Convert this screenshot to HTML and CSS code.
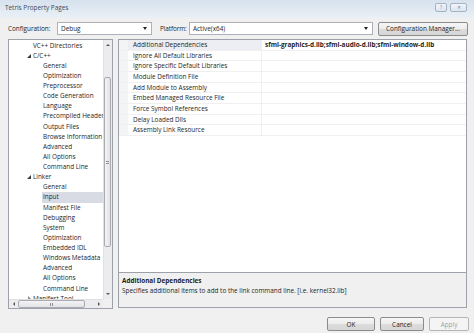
FILE: index.html
```html
<!DOCTYPE html>
<html>
<head>
<meta charset="utf-8">
<title>Tetris Property Pages</title>
<link rel="stylesheet" href="styles.css">
</head>
<body>
<div class="titlebar">
	<span class="title">Tetris Property Pages</span>
	<div class="caption">
		<span class="cbtn help">?</span>
		<span class="cbtn close">&#x2715;</span>
	</div>
</div>

<div class="toolbar">
	<label class="lbl cfg-lbl">Configuration:</label>
	<div class="combo cfg"><span>Debug</span><i class="drop"></i></div>
	<label class="lbl plat-lbl">Platform:</label>
	<div class="combo plat"><span>Active(x64)</span><i class="drop"></i></div>
	<button class="btn mgr">Configuration Manager...</button>
</div>

<div class="main">
	<div class="tree">
		<div class="tree-view">
			<div class="nodes">
				<div class="node l1"><i class="exp"></i><span class="txt">VC++ Directories</span></div>
				<div class="node l1"><i class="exp open"></i><span class="txt">C/C++</span></div>
				<div class="node l2"><span class="txt">General</span></div>
				<div class="node l2"><span class="txt">Optimization</span></div>
				<div class="node l2"><span class="txt">Preprocessor</span></div>
				<div class="node l2"><span class="txt">Code Generation</span></div>
				<div class="node l2"><span class="txt">Language</span></div>
				<div class="node l2"><span class="txt">Precompiled Headers</span></div>
				<div class="node l2"><span class="txt">Output Files</span></div>
				<div class="node l2"><span class="txt">Browse Information</span></div>
				<div class="node l2"><span class="txt">Advanced</span></div>
				<div class="node l2"><span class="txt">All Options</span></div>
				<div class="node l2"><span class="txt">Command Line</span></div>
				<div class="node l1"><i class="exp open"></i><span class="txt">Linker</span></div>
				<div class="node l2"><span class="txt">General</span></div>
				<div class="node l2 selected"><span class="txt">Input</span></div>
				<div class="node l2"><span class="txt">Manifest File</span></div>
				<div class="node l2"><span class="txt">Debugging</span></div>
				<div class="node l2"><span class="txt">System</span></div>
				<div class="node l2"><span class="txt">Optimization</span></div>
				<div class="node l2"><span class="txt">Embedded IDL</span></div>
				<div class="node l2"><span class="txt">Windows Metadata</span></div>
				<div class="node l2"><span class="txt">Advanced</span></div>
				<div class="node l2"><span class="txt">All Options</span></div>
				<div class="node l2"><span class="txt">Command Line</span></div>
				<div class="node l1"><i class="exp closed"></i><span class="txt">Manifest Tool</span></div>
			</div>
			<div class="vscroll">
				<div class="arr up"></div>
				<div class="vtrack"><div class="vthumb"><i class="grip"></i></div></div>
				<div class="arr down"></div>
			</div>
		</div>
		<div class="hbar">
			<div class="hscroll">
				<div class="arr left"></div>
				<div class="htrack"><div class="hthumb"><i class="grip"></i></div></div>
				<div class="arr right"></div>
			</div>
			<div class="corner"></div>
		</div>
	</div>

	<div class="props">
		<div class="grid">
			<div class="row selected"><span class="gm"></span><span class="name">Additional Dependencies</span><span class="val">sfml-graphics-d.lib;sfml-audio-d.lib;sfml-window-d.lib</span></div>
			<div class="row"><span class="gm"></span><span class="name">Ignore All Default Libraries</span><span class="val"></span></div>
			<div class="row"><span class="gm"></span><span class="name">Ignore Specific Default Libraries</span><span class="val"></span></div>
			<div class="row"><span class="gm"></span><span class="name">Module Definition File</span><span class="val"></span></div>
			<div class="row"><span class="gm"></span><span class="name">Add Module to Assembly</span><span class="val"></span></div>
			<div class="row"><span class="gm"></span><span class="name">Embed Managed Resource File</span><span class="val"></span></div>
			<div class="row"><span class="gm"></span><span class="name">Force Symbol References</span><span class="val"></span></div>
			<div class="row"><span class="gm"></span><span class="name">Delay Loaded Dlls</span><span class="val"></span></div>
			<div class="row"><span class="gm"></span><span class="name">Assembly Link Resource</span><span class="val"></span></div>
		</div>
		<div class="desc">
			<h4>Additional Dependencies</h4>
			<p>Specifies additional items to add to the link command line. [i.e. kernel32.lib]</p>
		</div>
	</div>
</div>

<div class="footer">
	<button class="btn ok">OK</button>
	<button class="btn cancel">Cancel</button>
	<button class="btn apply" disabled>Apply</button>
</div>
</body>
</html>
```

FILE: styles.css
```css
*{ margin:0; padding:0; box-sizing:border-box;}
body{ width:474px; height:333px; overflow:hidden; background:#f0f0f0; font-family:"Segoe UI","Open Sans",sans-serif; font-size:6.4px; color:#1e1e1e;}

/* title bar */
.titlebar{ height:18px; display:flex; justify-content:space-between; padding:0 7px 0 5px; background:linear-gradient(#d6e2ee,#eaf0f6);}
.title{ line-height:16px; color:#3c4a5c;}
.caption{ display:flex; gap:3px; margin-top:3px;}
.cbtn{ height:9px; border:1px solid #a3b2c4; border-radius:2px; background:linear-gradient(#f3f6fa,#dce4ee); font-size:5px; line-height:7px; text-align:center; color:#7b8796;}
.cbtn.help{ width:12px;}
.cbtn.close{ width:17px;}

/* configuration row */
.toolbar{ display:flex; align-items:center; height:21px; padding:0 6px 0 8px;}
.lbl{ display:block; flex:none; white-space:nowrap;}
.cfg-lbl{ width:49px;}
.plat-lbl{ width:29px; margin-left:8px; letter-spacing:-0.1px;}
.combo{ flex:none; height:13px; display:flex; align-items:center; justify-content:space-between; border:1px solid #adb0b8; background:#fff; padding:0 4px 0 3px;}
.combo.cfg{ width:95px;}
.combo.plat{ width:184px;}
.drop{ width:0; height:0; border-left:2.5px solid transparent; border-right:2.5px solid transparent; border-top:3px solid #222;}
.btn{ font-family:inherit; font-size:6.4px; color:#1e1e1e; height:14px; border:1px solid #8c8c8c; border-radius:2px; background:linear-gradient(#f6f6f6 0,#ececec 50%,#dcdcdc 51%,#d6d6d6 100%);}
.btn.mgr{ flex:none; width:90px; margin-left:5px;}

/* main area */
.main{ display:flex; gap:5px; padding:0 7px 0 8px;}

.tree{ width:105px; height:270px; border:1px solid #9da2aa; background:#fff; display:flex; flex-direction:column;}
.tree-view{ flex:1; display:flex; overflow:hidden;}
.nodes{ flex:1; overflow:hidden; padding-top:0.5px;}
.node{ height:10.125px; line-height:10.125px; display:flex; align-items:center; white-space:nowrap; overflow:hidden;}
.node.l1{ padding-left:16px;}
.node.l2{ padding-left:34px;}
.exp{ width:8px; height:8px; flex:none; display:flex; align-items:center; justify-content:center;}
.exp.open::before{ content:""; width:0; height:0; border-top:4px solid transparent; border-right:4px solid #3a3a3a;}
.exp.closed::before{ content:""; width:0; height:0; border-top:3px solid transparent; border-bottom:3px solid transparent; border-left:3px solid #8a8a8a;}
.txt{ flex:1; padding-left:1px; margin-left:-1px;}
.node.selected .txt{ background:#d9dbe4;}

.vscroll{ width:9px; flex:none; display:flex; flex-direction:column; background:#ececee; border-left:1px solid #e0e0e3;}
.arr{ flex:none; display:flex; align-items:center; justify-content:center;}
.vscroll .arr{ height:10px;}
.arr.up::before{ content:""; border-left:2px solid transparent; border-right:2px solid transparent; border-bottom:2px solid #555;}
.arr.down::before{ content:""; border-left:2px solid transparent; border-right:2px solid transparent; border-top:2px solid #555;}
.vtrack{ flex:1; padding-top:27px;}
.vthumb{ width:7px; height:170px; border:1px solid #a9abb0; border-radius:2px; background:linear-gradient(90deg,#f4f4f5,#e1e2e5); display:flex; align-items:center; justify-content:center;}
.grip{ display:block; width:3px; height:3px; border-top:1px solid #8f9196; border-bottom:1px solid #8f9196;}

.hbar{ height:9px; display:flex; flex:none;}
.hscroll{ flex:1; display:flex; background:#ececee; border-top:1px solid #e0e0e3;}
.hscroll .arr{ width:9px;}
.arr.left::before{ content:""; border-top:2px solid transparent; border-bottom:2px solid transparent; border-right:2px solid #555;}
.arr.right::before{ content:""; border-top:2px solid transparent; border-bottom:2px solid transparent; border-left:2px solid #555;}
.htrack{ flex:1;}
.hthumb{ width:67px; height:8px; border:1px solid #a9abb0; border-radius:2px; background:linear-gradient(#f4f4f5,#e1e2e5); display:flex; align-items:center; justify-content:center;}
.hthumb .grip{ width:3px; height:3px; border:none; border-left:1px solid #8f9196; border-right:1px solid #8f9196;}
.corner{ width:9px; background:#f0f0f0;}

.props{ flex:1; height:269px; display:flex; flex-direction:column;}
.grid{ height:234px; border:1px solid #9da2aa; background:#fff;}
.row{ height:10.67px; display:flex; white-space:nowrap; border-bottom:1px solid #f0f0f0;}
.gm{ width:9px; flex:none; background:#f3f4f6;}
.name{ width:134px; flex:none; padding-left:5px; line-height:10px; border-right:1px solid #f0f0f0;}
.row.selected .name{ background:#eceef3;}
.val{ flex:1; padding-left:3px; line-height:10px; font-weight:bold;}

.desc{ flex:1; border:1px solid #9da2aa; border-top:none; padding:3px 3px;}
.desc h4{ font-size:6.4px; font-weight:bold; line-height:10px;}
.desc p{ line-height:10px;}

.footer{ display:flex; justify-content:flex-end; gap:5px; padding:8px 5px 0 0;}
.btn.ok{ width:48px;}
.btn.cancel{ width:44px;}
.btn.apply{ width:40px; color:#a0a0a0; border-color:#b5b5b5; background:#f4f4f4;}
```
